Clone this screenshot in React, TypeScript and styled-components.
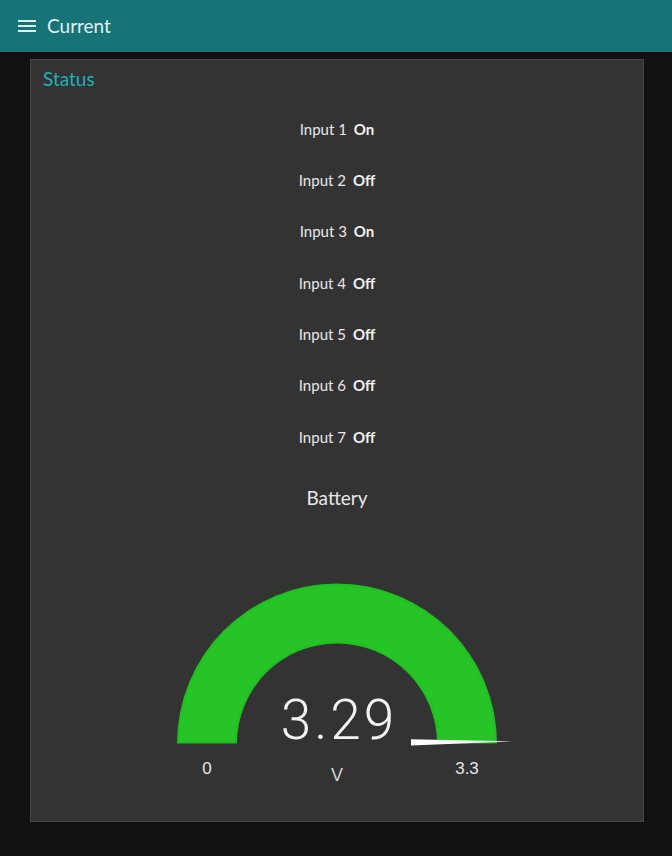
import React from "react";
import styled, { createGlobalStyle } from "styled-components";

const Global = createGlobalStyle`
  html, body { margin: 0; padding: 0; background: #111111; }
  body { font-family: Lato, "Noto Sans", sans-serif; }
`;

const Page = styled.div`
  width: 672px;
  height: 856px;
  background: #111111;
  overflow: hidden;
`;

const Toolbar = styled.header`
  height: 52px;
  background: #167377;
  box-shadow: 0 1px 2px rgba(0, 0, 0, 0.6);
  display: flex;
  align-items: center;
  padding-left: 18px;
  gap: 11px;
`;

const Title = styled.span`
  color: #e3efef;
  font-size: 19px;
  margin-top: -2px;
`;

const Content = styled.main`
  padding: 7px 0 0 30px;
`;

const Card = styled.section`
  width: 612px;
  height: 761px;
  background: #333333;
  border: 1px solid #474747;
  display: flex;
  flex-direction: column;
  align-items: center;
`;

const GroupTitle = styled.div`
  align-self: stretch;
  height: 43px;
  line-height: 38px;
  padding-left: 12px;
  color: #21b0b9;
  font-size: 19px;
`;

const Row = styled.div`
  height: 51.33px;
  display: flex;
  align-items: center;
  justify-content: center;
  gap: 7px;
  color: #e8e8e8;
  font-size: 15px;
`;

const Value = styled.span`
  font-weight: 700;
  color: #f0f0f0;
`;

const GaugeLabel = styled.div`
  margin-top: 10px;
  height: 51px;
  line-height: 51px;
  color: #e8e8e8;
  font-size: 19px;
`;

const GaugeSvg = styled.svg`
  display: block;
  font-family: "Liberation Sans", Arial, sans-serif;
`;

const BigValue = styled.text`
  font-family: Roboto, "Liberation Sans", sans-serif;
  font-weight: 300;
  letter-spacing: 3px;
`;

const inputs = [
  ["Input 1", "On"],
  ["Input 2", "Off"],
  ["Input 3", "On"],
  ["Input 4", "Off"],
  ["Input 5", "Off"],
  ["Input 6", "Off"],
  ["Input 7", "Off"],
];

function Gauge() {
  const cx = 180;
  const cy = 220.5;
  const R = 160;
  const r = 100;
  const d = `M ${cx - R} ${cy} A ${R} ${R} 0 0 1 ${cx + R} ${cy} L ${cx + r} ${cy} A ${r} ${r} 0 0 0 ${cx - r} ${cy} Z`;
  return (
    <GaugeSvg width="360" height="268" viewBox="0 0 360 268">
      <defs>
        <filter id="inner" x="-10%" y="-10%" width="120%" height="120%">
          <feGaussianBlur in="SourceAlpha" stdDeviation="1.5" result="b" />
          <feComposite in="SourceAlpha" in2="b" operator="out" result="edge" />
          <feFlood floodColor="#000" floodOpacity="0.25" />
          <feComposite in2="edge" operator="in" result="shadow" />
          <feMerge>
            <feMergeNode in="SourceGraphic" />
            <feMergeNode in="shadow" />
          </feMerge>
        </filter>
        <linearGradient id="needle" x1="0" x2="1" y1="0" y2="0">
          <stop offset="0" stopColor="#ffffff" />
          <stop offset="0.8" stopColor="#f0f0f0" />
          <stop offset="1" stopColor="#cccccc" />
        </linearGradient>
      </defs>
      <path d={d} fill="#27c427" filter="url(#inner)" />
      <polygon points="254,216.3 254,222.5 356,218.3" fill="url(#needle)" />
      <BigValue x={cx + 2} y="216" textAnchor="middle" fontSize="55" fill="#f2f2f2">3.29</BigValue>
      <text x="50" y="251" textAnchor="middle" fontSize="17" fill="#e6e6e6">0</text>
      <text x="310" y="251" textAnchor="middle" fontSize="17" fill="#e6e6e6">3.3</text>
      <text x={cx} y="258" textAnchor="middle" fontSize="18" fill="#d6d6d6">V</text>
    </GaugeSvg>
  );
}

function MenuIcon() {
  return (
    <svg width="18" height="14" viewBox="0 0 18 14">
      <rect x="0" y="1" width="18" height="2" fill="#e3efef" />
      <rect x="0" y="6" width="18" height="2" fill="#e3efef" />
      <rect x="0" y="11" width="18" height="2" fill="#e3efef" />
    </svg>
  );
}

export default function App() {
  return (
    <Page>
      <Global />
      <Toolbar>
        <MenuIcon />
        <Title>Current</Title>
      </Toolbar>
      <Content>
        <Card>
          <GroupTitle>Status</GroupTitle>
          {inputs.map(([label, v]) => (
            <Row key={label}>
              <span>{label}</span>
              <Value>{v}</Value>
            </Row>
          ))}
          <GaugeLabel>Battery</GaugeLabel>
          <Gauge />
        </Card>
      </Content>
    </Page>
  );
}
